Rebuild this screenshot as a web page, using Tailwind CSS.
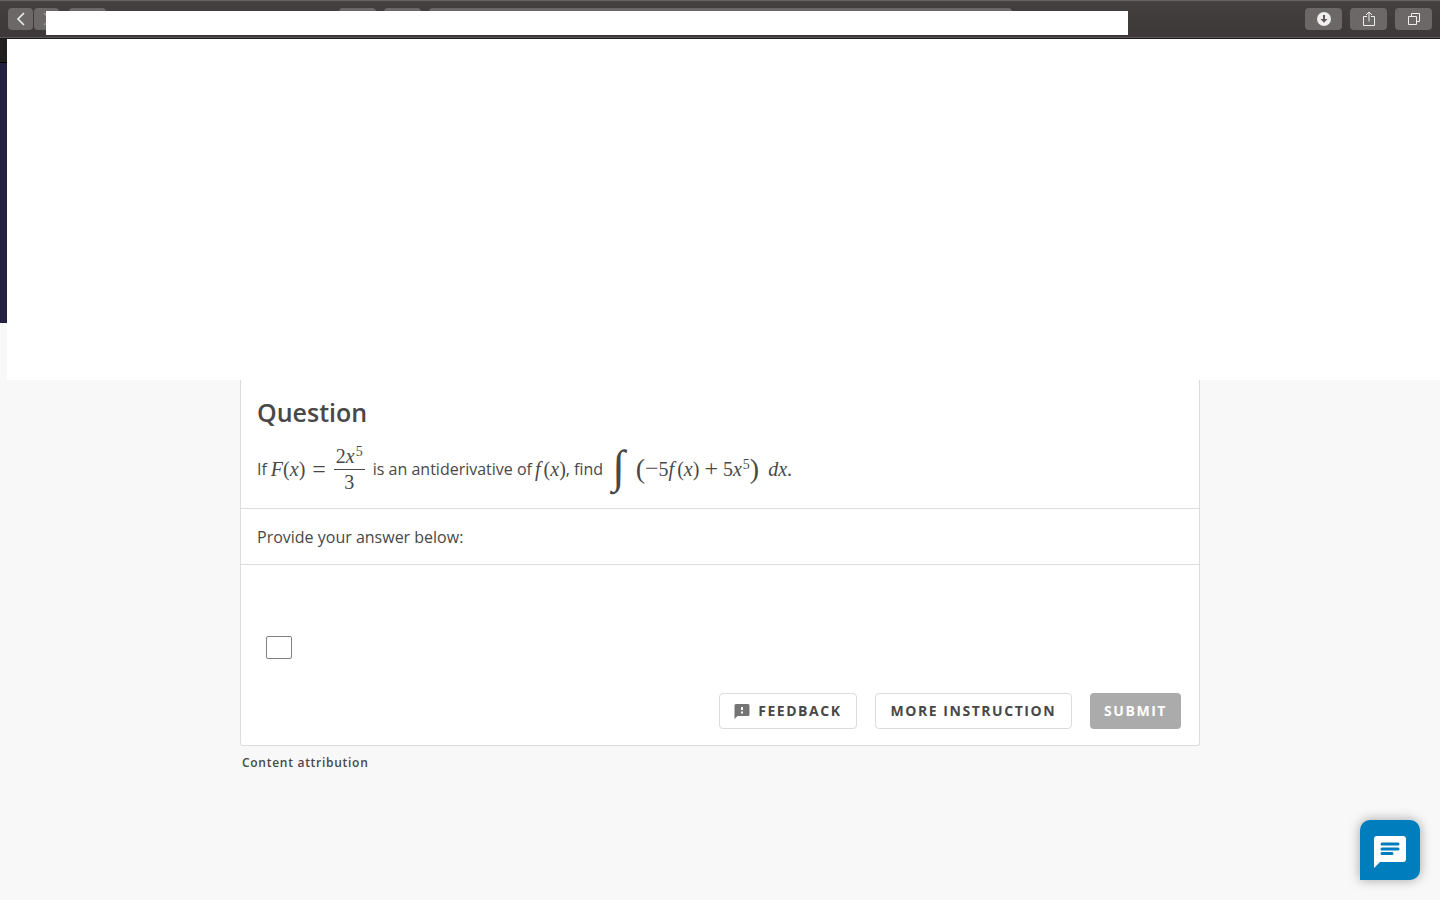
<!DOCTYPE html>
<html lang="en">
<head>
    <meta charset="UTF-8">
    <meta name="viewport" content="width=device-width, initial-scale=1.0">
    <title>Question</title>
    <script src="https://cdn.jsdelivr.net/npm/@tailwindcss/browser@4"></script>
</head>
<body class="min-h-screen bg-[#f8f8f8] font-['Open_Sans',sans-serif] text-[#484848]">
    <!-- Browser toolbar -->
    <header class="relative flex h-[39px] items-start border-t border-b border-t-[#686463] border-b-[#1c191b] bg-linear-to-b from-[#454140] to-[#3c3738] px-2 pt-[7px] shadow-[inset_0_-1px_0_#5b5656]">
        <button aria-label="Back" class="flex h-[22px] w-[25px] items-center justify-center rounded-sm bg-[#6c6868]">
            <svg class="size-4" viewBox="0 0 16 16" fill="none" stroke="#eeeeee" stroke-width="1.6"><path d="M11 2 5 8l6 6"/></svg>
        </button>
        <button aria-label="Forward" class="ml-px flex h-[22px] w-[25px] items-center justify-center rounded-sm bg-[#6c6868]">
            <svg class="size-4" viewBox="0 0 16 16" fill="none" stroke="#989494" stroke-width="1.6"><path d="m5 2 6 6-6 6"/></svg>
        </button>
        <button aria-label="Sidebar" class="ml-[10px] h-[22px] w-[37px] rounded-sm bg-[#6c6868]"></button>
        <button aria-label="Shield" class="ml-[233px] h-[22px] w-[37px] rounded-sm bg-[#6c6868]"></button>
        <button aria-label="Reader" class="ml-2 h-[22px] w-[37px] rounded-sm bg-[#6c6868]"></button>
        <div class="ml-2 h-[22px] w-[583px] rounded-sm bg-[#6c6868]"></div>

        <div class="ml-auto flex gap-2">
            <button aria-label="Downloads" class="flex h-[22px] w-[37px] items-center justify-center rounded-sm bg-[#6c6868]">
                <svg class="size-4" viewBox="0 0 16 16"><circle cx="8" cy="8" r="7" fill="#eeeeee"/><path d="M7 4h2v4h2.500L8 11.800 4.500 8H7z" fill="#5d5959"/></svg>
            </button>
            <button aria-label="Share" class="flex h-[22px] w-[37px] items-center justify-center rounded-sm bg-[#6c6868]">
                <svg class="h-4 w-3" viewBox="0 0 12 16" fill="none" stroke="#eeeeee"><path d="M4 5.500H.5v9h11v-9H8M6 10.500V1M3 4l3-3 3 3"/></svg>
            </button>
            <button aria-label="Tabs" class="flex h-[22px] w-[37px] items-center justify-center rounded-sm bg-[#6c6868]">
                <svg class="size-3" viewBox="0 0 12 12" fill="none" stroke="#eeeeee"><path d="M.5 3.500h8v8h-8zM3.500 3V.5h8v8H9"/></svg>
            </button>
        </div>
        <div class="absolute top-[10px] right-[312px] left-[46px] h-6 bg-white"></div>
    </header>

    <!-- Blank area with the page edge on the left -->
    <div class="flex h-[341px]">
        <div class="w-[7px] shrink-0">
            <div class="h-6 border-b border-black bg-[#201e1f]"></div>
            <div class="h-[260px] bg-[#22213f]"></div>
        </div>
        <div class="grow bg-white"></div>
    </div>

    <!-- Question card -->
    <main class="mx-auto max-w-[960px]">
        <div class="rounded-b-[3px] border border-t-0 border-[#dcdcdc] bg-white">
            <section class="px-4 pt-4 pb-[10px]">
                <h1 class="text-[25px] leading-8 font-semibold">Question</h1>
                <div class="mt-3 flex h-[58px] items-center leading-6 whitespace-nowrap">
                    <span>If</span>
                    <span class="ml-1 font-['Liberation_Serif',serif] text-xl leading-6"><i>F</i>(<i>x</i>)</span>
                    <span class="ml-[7px] font-['Liberation_Serif',serif] text-2xl leading-6">=</span>
                    <span class="mx-2 flex flex-col items-center font-['Liberation_Serif',serif] text-xl leading-6">
                        <span class="border-b border-[#484848] px-[2px] pb-px">2<i>x</i><sup class="ml-px text-sm leading-none">5</sup></span>
                        <span>3</span>
                    </span>
                    <span>is an antiderivative of</span>
                    <span class="ml-[3px] font-['Liberation_Serif',serif] text-xl leading-6"><i class="mr-[3px]">f</i>(<i>x</i>)</span>
                    <span>, find</span>
                    <span class="mr-[11px] ml-[9px] pb-1 font-['Liberation_Serif',serif] text-[46px] leading-[48px] italic">∫</span>
                    <span class="font-['Liberation_Serif',serif] text-[28px] leading-6">(</span>
                    <span class="pb-[2px] font-['Liberation_Serif',serif] text-xl leading-6"><span class="text-2xl leading-6">−</span>5<i class="mr-[3px]">f</i>(<i>x</i>) <span class="text-2xl leading-6">+</span> 5<i>x</i><sup class="ml-px text-sm leading-none">5</sup></span>
                    <span class="font-['Liberation_Serif',serif] text-[28px] leading-6">)</span>
                    <span class="ml-[9px] font-['Liberation_Serif',serif] text-xl leading-6"><i>dx</i>.</span>
                </div>
            </section>
            <label for="answer" class="block border-y border-[#dcdcdc] px-4 pt-4 pb-[14px] leading-[25px]">Provide your answer below:</label>
            <div class="px-[25px] pt-[71px]">
                <input id="answer" type="text" class="block h-[23px] w-[26px] rounded-xs border border-[#808080] bg-white">
            </div>
            <div class="mt-[34px] flex justify-end gap-[18px] px-[18px] pb-4 text-sm font-bold tracking-[0.11em]">
                <button class="flex h-9 items-center rounded-sm border border-[#dcdcdc] px-[14px]">
                    <svg class="mr-2 size-4" viewBox="0 0 16 16"><path d="M2 1h12q1.500 0 1.500 1.500v9q0 1.500-1.500 1.500H3.500L.5 16V2.500Q.5 1 2 1z" fill="#757575"/><path d="M7 4h2v3H7zM7 8.500h2v2H7z" fill="#fff"/></svg>
                    FEEDBACK
                </button>
                <button class="h-9 rounded-sm border border-[#dcdcdc] px-[15px]">MORE INSTRUCTION</button>
                <button class="h-9 rounded-sm bg-[#ababab] px-[14px] text-white">SUBMIT</button>
            </div>
        </div>
        <a href="#" class="mt-2 ml-[2px] inline-block text-xs leading-[18px] font-semibold tracking-[0.06em]">Content attribution</a>
    </main>

    <!-- Chat launcher -->
    <button aria-label="Chat" class="fixed right-5 bottom-5 flex size-[60px] items-center justify-center rounded-[10px] rounded-bl-none bg-[#007dbc] pt-1 shadow-[0_0_12px_rgba(0,0,0,0.35)]">
        <svg class="size-8" viewBox="0 0 32 32"><path d="M3 0h26q3 0 3 3v20q0 3-3 3H6l-6 6V3q0-3 3-3z" fill="#fff"/><path d="M8 8h16M8 13h16M8 17.500h10" stroke="#007dbc" stroke-width="3" stroke-linecap="round"/></svg>
    </button>
</body>
</html>
